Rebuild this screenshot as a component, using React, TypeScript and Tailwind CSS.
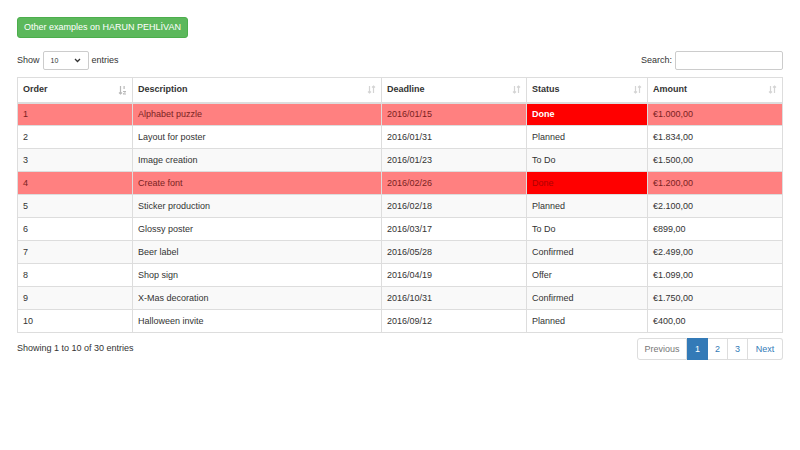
type Row = {
  id: number;
  desc: string;
  deadline: string;
  status: string;
  amount: string;
};

const rows: Row[] = [
  { id: 1, desc: "Alphabet puzzle", deadline: "2016/01/15", status: "Done", amount: "€1.000,00" },
  { id: 2, desc: "Layout for poster", deadline: "2016/01/31", status: "Planned", amount: "€1.834,00" },
  { id: 3, desc: "Image creation", deadline: "2016/01/23", status: "To Do", amount: "€1.500,00" },
  { id: 4, desc: "Create font", deadline: "2016/02/26", status: "Done", amount: "€1.200,00" },
  { id: 5, desc: "Sticker production", deadline: "2016/02/18", status: "Planned", amount: "€2.100,00" },
  { id: 6, desc: "Glossy poster", deadline: "2016/03/17", status: "To Do", amount: "€899,00" },
  { id: 7, desc: "Beer label", deadline: "2016/05/28", status: "Confirmed", amount: "€2.499,00" },
  { id: 8, desc: "Shop sign", deadline: "2016/04/19", status: "Offer", amount: "€1.099,00" },
  { id: 9, desc: "X-Mas decoration", deadline: "2016/10/31", status: "Confirmed", amount: "€1.750,00" },
  { id: 10, desc: "Halloween invite", deadline: "2016/09/12", status: "Planned", amount: "€400,00" },
];

function SortBoth() {
  return (
    <svg width="9" height="9" viewBox="0 0 9 9" className="text-[#d4d4d4]">
      <path d="M2.5 1v7M1 6.5l1.5 1.5 1.5-1.5" stroke="currentColor" strokeWidth="1.2" fill="none" />
      <path d="M6.5 8V1M5 2.5L6.5 1 8 2.5" stroke="currentColor" strokeWidth="1.2" fill="none" />
    </svg>
  );
}

function SortAsc() {
  return (
    <svg width="9" height="10" viewBox="0 0 9 10" className="text-[#b8b8b8]">
      <path d="M2.5 1v8M1 7.5l1.5 1.5 1.5-1.5" stroke="currentColor" strokeWidth="1.2" fill="none" />
      <rect x="5.5" y="1" width="1.2" height="3" fill="currentColor" />
      <path d="M5 6h3v1l-2 1.5h2V9.5H5V8.5l2-1.5H5z" fill="currentColor" />
    </svg>
  );
}

const cols = [
  { label: "Order", w: "w-[115px]", asc: true },
  { label: "Description", w: "w-[249px]" },
  { label: "Deadline", w: "w-[145px]" },
  { label: "Status", w: "w-[121px]" },
  { label: "Amount", w: "" },
];

export default function App() {
  return (
    <div className="px-[17px] pt-[17px] text-[9px] leading-[13px] text-[#333] font-['Liberation_Sans',Arial,sans-serif]">
      <button className="h-[21px] px-[6px] rounded-[3px] bg-[#5cb85c] border border-[#4cae4c] text-white text-[9px]">
        Other examples on HARUN PEHLİVAN
      </button>

      <div className="mt-[13px] flex items-center justify-between">
        <div className="flex items-center gap-[3px]">
          <span>Show</span>
          <div className="w-[46px] h-[19px] border border-[#ccc] rounded-[2px] flex items-center justify-between px-[7px] text-[7px]">
            <span>10</span>
            <svg width="7" height="5" viewBox="0 0 7 5">
              <path d="M1 1l2.5 2.5L6 1" stroke="#333" strokeWidth="1.3" fill="none" />
            </svg>
          </div>
          <span>entries</span>
        </div>
        <div className="flex items-center gap-[3px]">
          <span>Search:</span>
          <div className="w-[108px] h-[19px] border border-[#ccc] rounded-[2px]" />
        </div>
      </div>

      <table className="mt-[7px] w-full border-collapse border border-[#ddd] table-fixed">
        <thead>
          <tr>
            {cols.map((c) => (
              <th
                key={c.label}
                className={`${c.w} h-[25px] border border-[#ddd] border-b-2 px-[5px] text-left font-bold`}
              >
                <div className="flex items-center justify-between">
                  <span>{c.label}</span>
                  {c.asc ? <SortAsc /> : <SortBoth />}
                </div>
              </th>
            ))}
          </tr>
        </thead>
        <tbody>
          {rows.map((r, i) => {
            const hot = r.status === "Done";
            const rowCls = hot ? "bg-[#ff8080] text-[#7a1f1f]" : i % 2 === 0 ? "bg-[#f9f9f9]" : "bg-white";
            const td = "h-[23px] border border-[#ddd] px-[5px]";
            return (
              <tr key={r.id} className={rowCls}>
                <td className={td}>{r.id}</td>
                <td className={td}>{r.desc}</td>
                <td className={td}>{r.deadline}</td>
                <td
                  className={`${td} ${
                    hot ? (r.id === 1 ? "bg-[#ff0000] text-white font-bold" : "bg-[#ff0000] text-[#b00000]") : ""
                  }`}
                >
                  {r.status}
                </td>
                <td className={td}>{r.amount}</td>
              </tr>
            );
          })}
        </tbody>
      </table>

      <div className="mt-[5px] flex items-start justify-between">
        <div className="pt-[4px]">Showing 1 to 10 of 30 entries</div>
        <div className="flex h-[22px] text-[9px]">
          <span className="w-[50px] flex items-center justify-center border border-[#ddd] rounded-l-[3px] text-[#777]">
            Previous
          </span>
          <span className="w-[21px] flex items-center justify-center border border-[#337ab7] bg-[#337ab7] text-white">
            1
          </span>
          <span className="w-[20px] flex items-center justify-center border border-l-0 border-[#ddd] text-[#337ab7]">
            2
          </span>
          <span className="w-[20px] flex items-center justify-center border border-l-0 border-[#ddd] text-[#337ab7]">
            3
          </span>
          <span className="w-[35px] flex items-center justify-center border border-l-0 border-[#ddd] rounded-r-[3px] text-[#337ab7]">
            Next
          </span>
        </div>
      </div>
    </div>
  );
}
